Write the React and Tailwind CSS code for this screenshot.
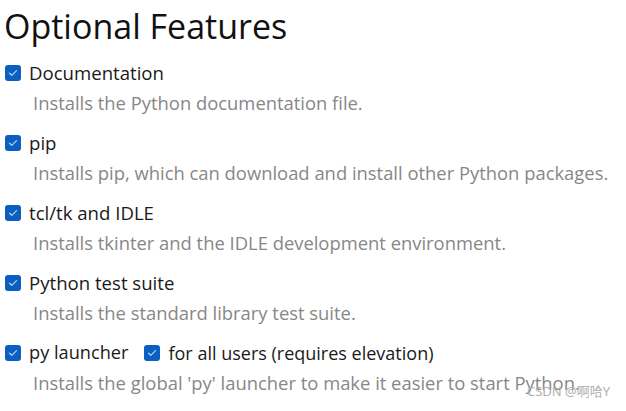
import React from "react";

function Check() {
  return (
    <span className="flex h-[16px] w-[16px] shrink-0 items-center justify-center rounded-[3px] bg-[#0a5fc0]">
      <svg width="10" height="8" viewBox="0 0 10 8" fill="none">
        <path d="M1.5 4.2 L3.8 6.3 L8.5 1.6" stroke="#b9d3f0" strokeWidth="1.2" strokeLinecap="round" strokeLinejoin="round" />
      </svg>
    </span>
  );
}

const items = [
  { label: "Documentation", desc: "Installs the Python documentation file." },
  { label: "pip", desc: "Installs pip, which can download and install other Python packages." },
  { label: "tcl/tk and IDLE", desc: "Installs tkinter and the IDLE development environment." },
  { label: "Python test suite", desc: "Installs the standard library test suite." },
];

export default function App() {
  return (
    <div className="relative h-[411px] w-[626px] overflow-hidden bg-white pl-[5px] pt-[5px]" style={{ fontFamily: '"Open Sans", "Noto Sans", sans-serif' }}>
      <h1 className="ml-[-1px] text-[34px] leading-[42px] text-[#111]">Optional Features</h1>
      <div className="mt-[11px] flex flex-col">
        {items.map((it) => (
          <div key={it.label} className="flex h-[70px] flex-col">
            <div className="flex h-[30px] items-center gap-[8px]">
              <Check />
              <span className="text-[18.6px] text-[#1a1a1a]">{it.label}</span>
            </div>
            <div className="ml-[28px] text-[18.4px] leading-[30px] text-[#878787]">{it.desc}</div>
          </div>
        ))}
        <div className="flex h-[70px] flex-col">
          <div className="flex h-[30px] items-center">
            <Check />
            <span className="ml-[8px] text-[18.2px] text-[#1a1a1a]">py launcher</span>
            <span className="ml-[16px]"><Check /></span>
            <span className="ml-[8px] text-[18px] text-[#1a1a1a]">for all users (requires elevation)</span>
          </div>
          <div className="ml-[28px] text-[18.4px] leading-[30px] text-[#878787]">Installs the global 'py' launcher to make it easier to start Python.</div>
        </div>
      </div>
      <div className="absolute left-[527px] top-[382px] z-10 text-[13px] text-[#b0b0b0]" style={{ fontFamily: '"Noto Sans", "Noto Sans CJK SC", sans-serif' }}>CSDN @啊哈Y</div>
    </div>
  );
}
